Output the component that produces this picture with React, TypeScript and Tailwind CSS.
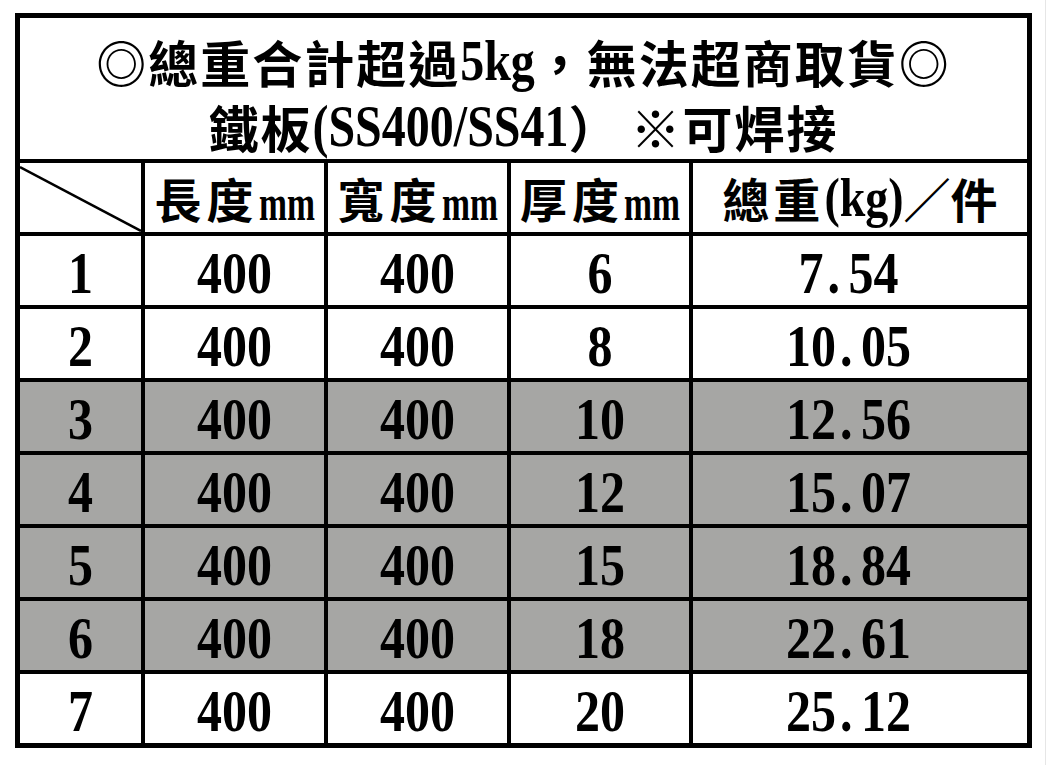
import React from "react";

const CJK = "font-['Noto_Sans_CJK_TC','Noto_Sans_CJK_SC',sans-serif]";
const LAT = "font-['Liberation_Serif','Times_New_Roman',serif] font-bold";

function Lat({ children, className = "" }: { children: React.ReactNode; className?: string }) {
  return <span className={`inline-block ${LAT} ${className}`}>{children}</span>;
}

function Num({ v }: { v: string }) {
  const parts = v.split("");
  return (
    <span className={`inline-flex items-baseline ${LAT} text-[50px] leading-none scale-y-[1.18]`}>
      {parts.map((c, i) =>
        c === "." ? (
          <span key={i} className="inline-block w-[25px] pl-[4px] text-left">.</span>
        ) : (
          <span key={i}>{c}</span>
        )
      )}
    </span>
  );
}

function Mm() {
  return (
    <span className="inline-block w-[56px] text-left whitespace-nowrap">
      <span className={`inline-block origin-bottom-left ${LAT} text-[40px] leading-none scale-x-[0.84] scale-y-[1.25] translate-y-[4px]`}>mm</span>
    </span>
  );
}

const rows = [
  { n: "1", a: "400", b: "400", t: "6", w: "7.54", g: false },
  { n: "2", a: "400", b: "400", t: "8", w: "10.05", g: false },
  { n: "3", a: "400", b: "400", t: "10", w: "12.56", g: true },
  { n: "4", a: "400", b: "400", t: "12", w: "15.07", g: true },
  { n: "5", a: "400", b: "400", t: "15", w: "18.84", g: true },
  { n: "6", a: "400", b: "400", t: "18", w: "22.61", g: true },
  { n: "7", a: "400", b: "400", t: "20", w: "25.12", g: false },
];

export default function App() {
  return (
    <div className="min-h-[765px] w-[1046px] bg-white border-r border-[#e6e6e6] pt-[13px] pl-[15px] text-black">
      <div className="w-[1017px] border-[5px] border-black bg-black grid grid-cols-[121px_179px_179px_178px_1fr] gap-[4px]">
        {/* Title */}
        <div className={`col-span-5 h-[141px] bg-white pt-[10px] flex flex-col ${CJK} font-bold`}>
          <div className="h-[65px] flex items-center justify-center text-[50px] tracking-[2px] leading-none whitespace-nowrap">
            <span>◎總重合計超過</span>
            <Lat className="text-[48px] scale-y-[1.18] tracking-normal">5kg</Lat>
            <span>，無法超商取貨◎</span>
          </div>
          <div className="h-[65px] flex items-center justify-center text-[50px] tracking-[2px] leading-none whitespace-nowrap">
            <span>鐵板</span>
            <Lat className="text-[48px] scale-y-[1.22] tracking-normal">(SS400/SS41</Lat>
            <span>）</span>
            <span className="ml-[10px]">※可焊接</span>
          </div>
        </div>

        {/* Header */}
        <div className="relative h-[69px] bg-white">
          <svg className="absolute inset-0" width="121" height="69" viewBox="0 0 121 69">
            <line x1="0" y1="4" x2="121" y2="68" stroke="black" strokeWidth="2.5" />
          </svg>
        </div>
        {["長度", "寬度", "厚度"].map((h) => (
          <div
            key={h}
            className={`h-[69px] bg-white flex items-center justify-center ${CJK} font-bold text-[47px] leading-none whitespace-nowrap`}
          >
            <span className="pt-[4px]">
              <span className="tracking-[5px]">{h}</span>
              <Mm />
            </span>
          </div>
        ))}
        <div className={`h-[69px] bg-white flex items-center justify-center ${CJK} font-bold text-[47px] leading-none whitespace-nowrap`}>
          <span className="tracking-[4px]">總重</span>
          <Lat className="text-[46px] scale-y-[1.2]">(kg)</Lat>
          <span>／件</span>
        </div>

        {/* Body */}
        {rows.map((r) => {
          const bg = r.g ? "bg-[#a6a6a4]" : "bg-white";
          const cell = `h-[69px] ${bg} flex items-center justify-center pt-[4px]`;
          return (
            <React.Fragment key={r.n}>
              <div className={cell}><Num v={r.n} /></div>
              <div className={cell}><Num v={r.a} /></div>
              <div className={cell}><Num v={r.b} /></div>
              <div className={cell}><Num v={r.t} /></div>
              <div className={`${cell} pr-[23px]`}><Num v={r.w} /></div>
            </React.Fragment>
          );
        })}
      </div>
    </div>
  );
}
